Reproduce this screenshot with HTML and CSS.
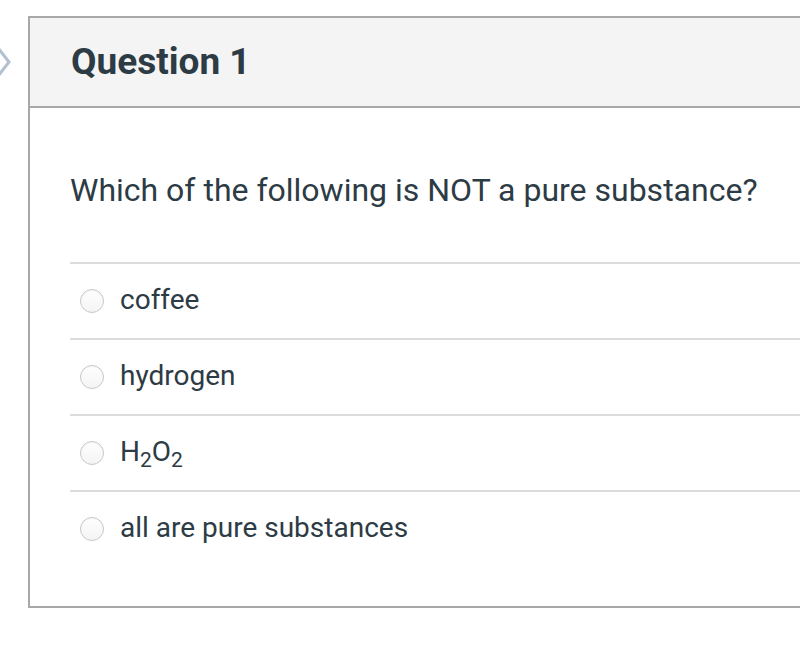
FILE: index.html
```html
<!DOCTYPE html>
<html>
	<head>
		<meta charset="UTF-8">
		<title>Question 1</title>
		<link rel="stylesheet" href="styles.css">
	</head>
	<body>
		<div class="page">
			<div class="side">
				<svg width="14" height="34" viewBox="0 0 14 34"><path d="M-2 3 L9 17 L-2 31" fill="none" stroke="#b3c1cf" stroke-width="3"/></svg>
			</div>
			<div class="quiz">
				<div class="head">
					<h2 class="title">Question 1</h2>
				</div>
				<div class="body">
					<p class="text">Which of the following is NOT a pure substance?</p>
					<ul class="answers">
						<li><span class="radio"></span><span class="label">coffee</span></li>
						<li><span class="radio"></span><span class="label">hydrogen</span></li>
						<li><span class="radio"></span><span class="label">H<sub>2</sub>O<sub>2</sub></span></li>
						<li><span class="radio"></span><span class="label">all are pure substances</span></li>
					</ul>
				</div>
			</div>
		</div>
	</body>
</html>
```
FILE: styles.css
```css
*{
	margin: 0;
	padding: 0;
	box-sizing: border-box;
}
body{
	font-family: Roboto, "Liberation Sans", sans-serif;
	color: #2d3b45;
	background: #fff;
	overflow: hidden;
	width: 800px;
	height: 652px;
}
.page{
	display: flex;
	padding-top: 16px;
}
.side{
	width: 28px;
	flex: none;
	padding-top: 29px;
}
.side svg{
	display: block;
}
.quiz{
	width: 800px;
	flex: none;
	border: 2px solid #a8a8a8;
	border-right: none;
}
.head{
	height: 90px;
	background: #f4f4f4;
	border-bottom: 2px solid #a8a8a8;
	display: flex;
	align-items: center;
	padding-left: 41px;
}
.title{
	font-size: 37px;
	font-weight: bold;
	line-height: 1;
	padding-bottom: 2px;
}
.body{
	padding: 62px 0 40px 40px;
}
.text{
	font-size: 32px;
	line-height: 40px;
	margin-bottom: 52px;
}
.answers{
	list-style: none;
}
.answers li{
	height: 76px;
	border-top: 2px solid #dcdcdc;
	display: flex;
	align-items: center;
	padding-left: 10px;
}
.radio{
	width: 24px;
	height: 24px;
	border-radius: 50%;
	border: 1px solid #c8c8c8;
	background: linear-gradient(#fff, #f4f4f4);
	box-shadow: inset 0 1px 1px rgba(0,0,0,0.05);
	margin-right: 16px;
	flex: none;
}
.label{
	font-size: 28px;
	line-height: 30px;
	padding-bottom: 2px;
}
.label sub{
	font-size: 21px;
	vertical-align: -6px;
	line-height: 0;
}
```
